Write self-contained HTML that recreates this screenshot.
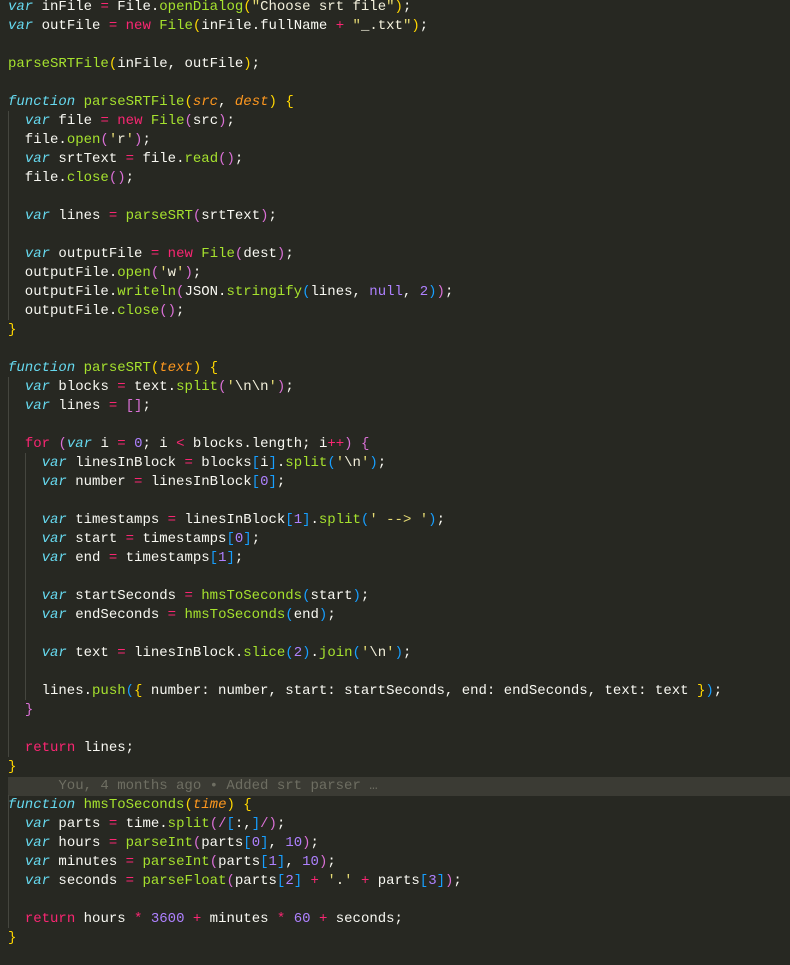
<!DOCTYPE html>
<html><head><meta charset="utf-8"><style>
html,body{margin:0;padding:0;background:#272822;width:790px;height:965px;overflow:hidden}
#c{position:absolute;left:8px;top:-2.5px;font:14px/19px "Liberation Mono",monospace;color:#f8f8f2}
.l{height:19px;white-space:pre}
.s{color:#66d9ef;font-style:italic}
.k{color:#f92672}
.f{color:#a6e22e}
.p{color:#fd971f;font-style:italic}
.n{color:#ae81ff}
.q{color:#e6db74}
.t{color:#f3f0dc}
.b1{color:#ffd700}.b2{color:#da70d6}.b3{color:#179fff}
.g{position:absolute;width:1px;background:#45463f}
#bl{position:absolute;left:8px;right:0;top:776.5px;height:19px;background:#3b3b34}
.bt{color:#6e6e62}
</style></head><body>
<div id="bl"></div>
<div class="g" style="left:8px;top:111px;height:209px"></div>
<div class="g" style="left:8px;top:377px;height:380px"></div>
<div class="g" style="left:25px;top:453px;height:247px"></div>
<div class="g" style="left:8px;top:795px;height:133px"></div>
<div id="c"><div class="l"><span class="s">var</span> inFile <span class="k">=</span> File.<span class="f">openDialog</span><span class="b1">(</span><span class="q">"</span><span class="t">Choose srt file</span><span class="q">"</span><span class="b1">)</span>;</div><div class="l"><span class="s">var</span> outFile <span class="k">=</span> <span class="k">new</span> <span class="f">File</span><span class="b1">(</span>inFile.fullName <span class="k">+</span> <span class="q">"</span><span class="t">_.txt</span><span class="q">"</span><span class="b1">)</span>;</div><div class="l"></div><div class="l"><span class="f">parseSRTFile</span><span class="b1">(</span>inFile, outFile<span class="b1">)</span>;</div><div class="l"></div><div class="l"><span class="s">function</span> <span class="f">parseSRTFile</span><span class="b1">(</span><span class="p">src</span>, <span class="p">dest</span><span class="b1">)</span> <span class="b1">{</span></div><div class="l">  <span class="s">var</span> file <span class="k">=</span> <span class="k">new</span> <span class="f">File</span><span class="b2">(</span>src<span class="b2">)</span>;</div><div class="l">  file.<span class="f">open</span><span class="b2">(</span><span class="q">'</span><span class="t">r</span><span class="q">'</span><span class="b2">)</span>;</div><div class="l">  <span class="s">var</span> srtText <span class="k">=</span> file.<span class="f">read</span><span class="b2">()</span>;</div><div class="l">  file.<span class="f">close</span><span class="b2">()</span>;</div><div class="l"></div><div class="l">  <span class="s">var</span> lines <span class="k">=</span> <span class="f">parseSRT</span><span class="b2">(</span>srtText<span class="b2">)</span>;</div><div class="l"></div><div class="l">  <span class="s">var</span> outputFile <span class="k">=</span> <span class="k">new</span> <span class="f">File</span><span class="b2">(</span>dest<span class="b2">)</span>;</div><div class="l">  outputFile.<span class="f">open</span><span class="b2">(</span><span class="q">'</span><span class="t">w</span><span class="q">'</span><span class="b2">)</span>;</div><div class="l">  outputFile.<span class="f">writeln</span><span class="b2">(</span>JSON.<span class="f">stringify</span><span class="b3">(</span>lines, <span class="n">null</span>, <span class="n">2</span><span class="b3">)</span><span class="b2">)</span>;</div><div class="l">  outputFile.<span class="f">close</span><span class="b2">()</span>;</div><div class="l"><span class="b1">}</span></div><div class="l"></div><div class="l"><span class="s">function</span> <span class="f">parseSRT</span><span class="b1">(</span><span class="p">text</span><span class="b1">)</span> <span class="b1">{</span></div><div class="l">  <span class="s">var</span> blocks <span class="k">=</span> text.<span class="f">split</span><span class="b2">(</span><span class="q">'</span><span class="t">\n\n</span><span class="q">'</span><span class="b2">)</span>;</div><div class="l">  <span class="s">var</span> lines <span class="k">=</span> <span class="b2">[]</span>;</div><div class="l"></div><div class="l">  <span class="k">for</span> <span class="b2">(</span><span class="s">var</span> i <span class="k">=</span> <span class="n">0</span>; i <span class="k">&lt;</span> blocks.length; i<span class="k">++</span><span class="b2">)</span> <span class="b2">{</span></div><div class="l">    <span class="s">var</span> linesInBlock <span class="k">=</span> blocks<span class="b3">[</span>i<span class="b3">]</span>.<span class="f">split</span><span class="b3">(</span><span class="q">'</span><span class="t">\n</span><span class="q">'</span><span class="b3">)</span>;</div><div class="l">    <span class="s">var</span> number <span class="k">=</span> linesInBlock<span class="b3">[</span><span class="n">0</span><span class="b3">]</span>;</div><div class="l"></div><div class="l">    <span class="s">var</span> timestamps <span class="k">=</span> linesInBlock<span class="b3">[</span><span class="n">1</span><span class="b3">]</span>.<span class="f">split</span><span class="b3">(</span><span class="q">'</span><span class="t"> </span><span class="q">--&gt;</span><span class="t"> </span><span class="q">'</span><span class="b3">)</span>;</div><div class="l">    <span class="s">var</span> start <span class="k">=</span> timestamps<span class="b3">[</span><span class="n">0</span><span class="b3">]</span>;</div><div class="l">    <span class="s">var</span> end <span class="k">=</span> timestamps<span class="b3">[</span><span class="n">1</span><span class="b3">]</span>;</div><div class="l"></div><div class="l">    <span class="s">var</span> startSeconds <span class="k">=</span> <span class="f">hmsToSeconds</span><span class="b3">(</span>start<span class="b3">)</span>;</div><div class="l">    <span class="s">var</span> endSeconds <span class="k">=</span> <span class="f">hmsToSeconds</span><span class="b3">(</span>end<span class="b3">)</span>;</div><div class="l"></div><div class="l">    <span class="s">var</span> text <span class="k">=</span> linesInBlock.<span class="f">slice</span><span class="b3">(</span><span class="n">2</span><span class="b3">)</span>.<span class="f">join</span><span class="b3">(</span><span class="q">'</span><span class="t">\n</span><span class="q">'</span><span class="b3">)</span>;</div><div class="l"></div><div class="l">    lines.<span class="f">push</span><span class="b3">(</span><span class="b1">{</span> number: number, start: startSeconds, end: endSeconds, text: text <span class="b1">}</span><span class="b3">)</span>;</div><div class="l">  <span class="b2">}</span></div><div class="l"></div><div class="l">  <span class="k">return</span> lines;</div><div class="l"><span class="b1">}</span></div><div class="l bt">      You, 4 months ago • Added srt parser …</div><div class="l"><span class="s">function</span> <span class="f">hmsToSeconds</span><span class="b1">(</span><span class="p">time</span><span class="b1">)</span> <span class="b1">{</span></div><div class="l">  <span class="s">var</span> parts <span class="k">=</span> time.<span class="f">split</span><span class="b2">(</span><span class="b2">/</span><span class="b3">[</span>:,<span class="b3">]</span><span class="b2">/</span><span class="b2">)</span>;</div><div class="l">  <span class="s">var</span> hours <span class="k">=</span> <span class="f">parseInt</span><span class="b2">(</span>parts<span class="b3">[</span><span class="n">0</span><span class="b3">]</span>, <span class="n">10</span><span class="b2">)</span>;</div><div class="l">  <span class="s">var</span> minutes <span class="k">=</span> <span class="f">parseInt</span><span class="b2">(</span>parts<span class="b3">[</span><span class="n">1</span><span class="b3">]</span>, <span class="n">10</span><span class="b2">)</span>;</div><div class="l">  <span class="s">var</span> seconds <span class="k">=</span> <span class="f">parseFloat</span><span class="b2">(</span>parts<span class="b3">[</span><span class="n">2</span><span class="b3">]</span> <span class="k">+</span> <span class="q">'</span><span class="t">.</span><span class="q">'</span> <span class="k">+</span> parts<span class="b3">[</span><span class="n">3</span><span class="b3">]</span><span class="b2">)</span>;</div><div class="l"></div><div class="l">  <span class="k">return</span> hours <span class="k">*</span> <span class="n">3600</span> <span class="k">+</span> minutes <span class="k">*</span> <span class="n">60</span> <span class="k">+</span> seconds;</div><div class="l"><span class="b1">}</span></div></div>
</body></html>
